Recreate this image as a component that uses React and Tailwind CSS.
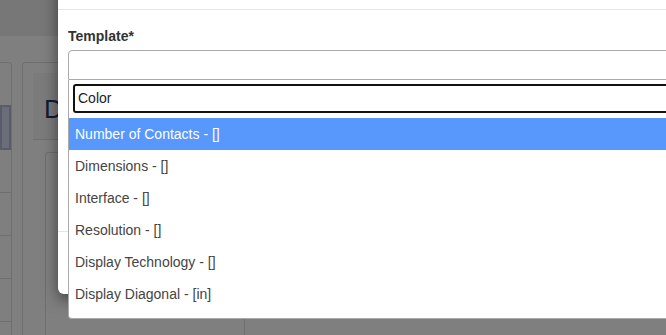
import React from "react";

const options = [
  "Number of Contacts - []",
  "Dimensions - []",
  "Interface - []",
  "Resolution - []",
  "Display Technology - []",
  "Display Diagonal - [in]",
];

export default function App() {
  return (
    <div className="relative w-[666px] h-[335px] overflow-hidden bg-white font-['Liberation_Sans',Arial,sans-serif]">
      {/* underlying page */}
      <div className="flex flex-col w-full h-full">
        <div className="h-[36px] shrink-0 bg-[#eeeeee]" />
        <div className="flex gap-[10px] pt-[26px] flex-1">
          <div className="w-[12px] shrink-0 flex flex-col border-t border-r border-[#dddddd] rounded-tr-[4px]">
            <div className="h-[42px]" />
            <div className="h-[45px] bg-[#d7dcef] border-2 border-[#b3bad6]" />
            <div className="h-[43px] border-b border-[#dddddd]" />
            <div className="h-[43px] border-b border-[#dddddd]" />
            <div className="h-[43px] border-b border-[#dddddd]" />
            <div className="h-[43px] border-b border-[#dddddd]" />
          </div>
          <div className="flex-1 flex flex-col border-t border-l border-[#dddddd] rounded-tl-[4px] p-[10px]">
            <div className="h-[67px] bg-[#f7f7f7] border-b border-[#dddddd] flex items-center pl-[11px] pt-[7px] text-[26px] text-[#1d3670]">
              D
            </div>
            <div className="mt-[12px] ml-[12px] w-[200px] h-[200px] border-t border-l border-r border-[#dddddd] rounded-t-[4px]" />
          </div>
        </div>
      </div>
      <div className="absolute inset-0 bg-black/50" />

      {/* modal */}
      <div className="absolute left-[58px] top-[-40px] w-[700px] h-[334px] bg-white rounded-[6px] shadow-[0_5px_15px_rgba(0,0,0,0.5)] flex flex-col">
        <div className="h-[50px] shrink-0 border-b border-[#e5e5e5]" />
        <div className="flex-1 px-[10px] pt-[16px]">
          <div className="text-[14px] leading-[20px] font-bold text-[#333333] mb-[4px]">Template*</div>
          <div className="h-[30px] border border-[#aaaaaa] rounded-t-[4px] bg-white" />
        </div>
        <div className="h-[63px] shrink-0 border-t border-[#e5e5e5]" />
      </div>

      {/* select2 dropdown */}
      <div className="absolute left-[68px] top-[80px] w-[700px] bg-white border-x border-b border-[#aaaaaa] rounded-b-[4px]">
        <div className="px-[4px] pt-[4px] pb-[5px]">
          <div className="h-[29px] border-2 border-[#111111] rounded-[3px] flex items-center pl-[3px] text-[14px] text-[#222222]">
            Color
          </div>
        </div>
        <div className="h-[200px] overflow-hidden">
          {options.map((o, i) => (
            <div
              key={o}
              className={
                i === 0
                  ? "h-[32px] px-[6px] flex items-center text-[14px] bg-[#5897fb] text-white"
                  : "h-[32px] px-[6px] flex items-center text-[14px] text-[#444444]"
              }
            >
              {o}
            </div>
          ))}
        </div>
      </div>
    </div>
  );
}
